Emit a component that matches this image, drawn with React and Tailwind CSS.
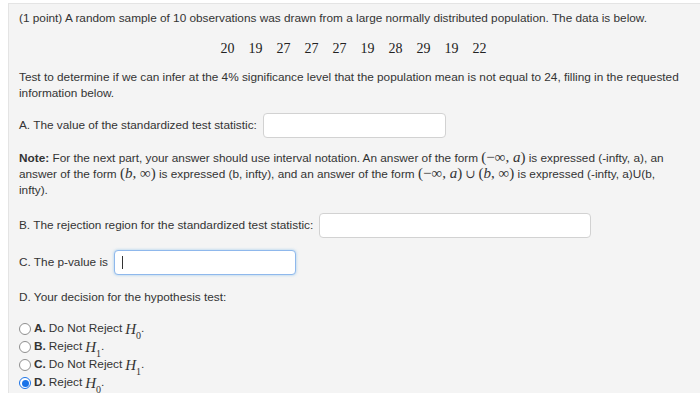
import React from "react";

const serif = { fontFamily: '"Liberation Serif", "DejaVu Serif", serif' };

const M = ({ children }) => (
  <span className="italic" style={serif}>
    {children}
  </span>
);

const Interval = ({ a, b }) => (
  <span className="text-[15px] leading-[14px] whitespace-nowrap" style={serif}>
    (<span>{a}</span>, <span>{b}</span>)
  </span>
);

const H = ({ sub }) => (
  <span className="italic text-[15px]" style={serif}>
    H<sub className="text-[10px] not-italic align-[-3px]">{sub}</sub>
  </span>
);

const Radio = ({ checked }) =>
  checked ? (
    <span className="inline-flex w-[12px] h-[12px] rounded-full border border-[#1a73e8] bg-white items-center justify-center mr-[3px]">
      <span className="w-[7px] h-[7px] rounded-full bg-[#1a73e8]" />
    </span>
  ) : (
    <span className="inline-block w-[12px] h-[12px] rounded-full border border-[#8f8f8f] bg-white mr-[3px]" />
  );

const Input = ({ w, focused, cursor }) => (
  <div
    className={`h-[25px] rounded-[4px] bg-white border flex items-center px-[7px] ${w} ${
      focused
        ? "border-[#8fb8ec] shadow-[0_0_3px_rgba(102,175,233,0.6)]"
        : "border-[#d2d2d2]"
    }`}
  >
    {cursor && <span className="w-px h-[13px] bg-[#333]" />}
  </div>
);

export default function App() {
  const data = [20, 19, 27, 27, 27, 19, 28, 29, 19, 22];
  const options = [
    { k: "A.", t: "Do Not Reject", s: "0" },
    { k: "B.", t: "Reject", s: "1" },
    { k: "C.", t: "Do Not Reject", s: "1" },
    { k: "D.", t: "Reject", s: "0", checked: true },
  ];

  return (
    <div
      className="w-[700px] h-[400px] bg-white pt-[3px] pl-[8px] overflow-hidden text-[#333] text-[11.8px]"
      style={{ fontFamily: '"Liberation Sans", Arial, sans-serif' }}
    >
      <div className="h-[390px] bg-[#f4f4f4] border-t border-l border-[#e4e4e4] pl-[10px] pt-[6px] pr-[12px]">
        <p className="leading-[16px]">
          (1 point) A random sample of 10 observations was drawn from a large
          normally distributed population. The data is below.
        </p>

        <div
          className="flex justify-center gap-[14px] mt-[12px] h-[20px] items-center text-[14px] text-[#222]"
          style={serif}
        >
          {data.map((d, i) => (
            <span key={i}>{d}</span>
          ))}
        </div>

        <p className="leading-[16px] mt-[11px]">
          Test to determine if we can infer at the 4% significance level that
          the population mean is not equal to 24, filling in the requested
          information below.
        </p>

        <div className="flex items-center gap-[6px] mt-[12px]">
          <span>A. The value of the standardized test statistic:</span>
          <Input w="w-[183px]" />
        </div>

        <p className="leading-[16px] mt-[12px] w-[656px]">
          <b>Note:</b> For the next part, your answer should use interval
          notation. An answer of the form <Interval a="−∞" b={<M>a</M>} /> is
          expressed (-infty, a), an answer of the form{" "}
          <Interval a={<M>b</M>} b="∞" /> is expressed (b, infty), and an
          answer of the form <Interval a="−∞" b={<M>a</M>} />{" "}
          <span style={serif}>∪</span> <Interval a={<M>b</M>} b="∞" /> is
          expressed (-infty, a)U(b, infty).
        </p>

        <div className="flex items-center gap-[6px] mt-[15px]">
          <span>B. The rejection region for the standardized test statistic:</span>
          <Input w="w-[272px]" />
        </div>

        <div className="flex items-center gap-[6px] mt-[12px]">
          <span>C. The p-value is</span>
          <Input w="w-[182px]" focused cursor />
        </div>

        <p className="leading-[16px] mt-[14px]">D. Your decision for the hypothesis test:</p>

        <div className="mt-[15px] flex flex-col">
          {options.map((o) => (
            <div key={o.k} className="flex items-center h-[18px]">
              <Radio checked={o.checked} />
              <b className="mr-[3px]">{o.k}</b>
              <span className="mr-[3px]">{o.t}</span>
              <H sub={o.s} />
              <span>.</span>
            </div>
          ))}
        </div>
      </div>
    </div>
  );
}
